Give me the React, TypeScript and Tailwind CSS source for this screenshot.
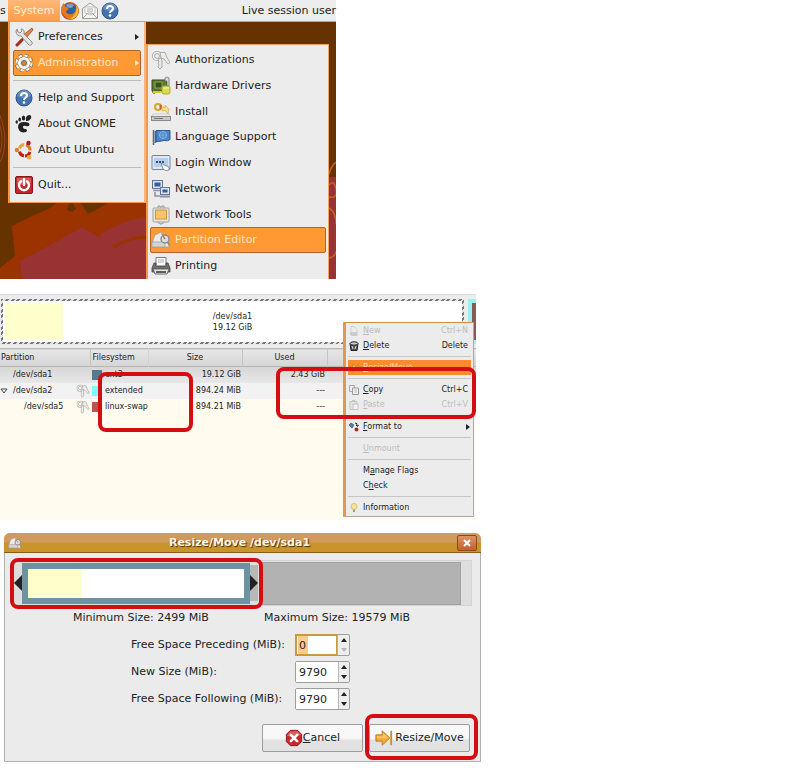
import type { ReactNode } from "react";
import clsx from "clsx";

function Icon({ box = 20, className = "size-5", children }: { box?: number; className?: string; children: ReactNode }) {
  return (
    <svg viewBox={`0 0 ${box} ${box}`} className={clsx("shrink-0", className)} fill="none" aria-hidden="true">
      {children}
    </svg>
  );
}

const HelpIcon = () => (
  <Icon>
    <circle cx="10" cy="10" r="8" fill="#4472ae" stroke="#2c5488" />
    <path d="M3 8a7 6 0 0 1 14 0q-7 4-14 0" fill="#7aa0d0" opacity=".6" />
    <path d="M7 8q0-3 3-3t3 2.6q0 1.6-1.800 2.400-1.200.7-1.200 2" stroke="#fff" strokeWidth="2" />
    <circle cx="10" cy="14.500" r="1.300" fill="#fff" />
  </Icon>
);

const FirefoxIcon = () => (
  <Icon>
    <circle cx="10" cy="10" r="9" fill="#c9591b" />
    <circle cx="10" cy="8.500" r="6.500" fill="#2f5f9e" />
    <path d="M6 4q4-3 8 0-1 3-4 3T6 4" fill="#6fa3d6" />
    <path d="M1 8Q2 3 4 2q0 3 3 4l2 2q-3 1-3 3 2 3 6 2 3-1 4-5 1 1 3 1-1 9-9 10Q2 19 1 8" fill="#e8781e" />
    <path d="M16 4q4 5 1 10-2 4-7 4 5-3 6-7 1-4 0-7" fill="#f6c02d" />
    <path d="M2 11q2 6 7 7-6 0-7-7" fill="#8a2f12" />
  </Icon>
);

const MailIcon = () => (
  <Icon>
    <path d="M2.500 7.500 10 2l7.500 5.500v10h-15z" fill="#f4f4f2" stroke="#9b9b98" />
    <path d="M5 6h10v6l-5 2-5-2z" fill="#fff" stroke="#c2c2bf" />
    <path d="M3 17l5-5h4l5 5M7 8h6M7 10h6" stroke="#aaaaa7" />
  </Icon>
);

const PreferencesIcon = () => (
  <Icon>
    <path d="M15 5L6 14" stroke="#777" strokeWidth="1.500" />
    <path d="M18 1l1 2-8 9-3-3z" fill="#e08650" stroke="#a2481a" strokeWidth=".8" />
    <path d="M3 2l1 3 2 1 2-2-1-2q4 0 3 5l8 8q1 2-1 3-2 1-3-1L7 9Q2 9 2 4z" fill="#e4e4e1" stroke="#777" strokeWidth=".8" />
    <path d="M8 13L3 18" stroke="#a22b1b" strokeWidth="3" strokeLinecap="round" />
  </Icon>
);

const GearIcon = () => (
  <Icon>
    <circle cx="10" cy="10" r="7.500" stroke="#6f6a62" strokeWidth="3.600" strokeDasharray="3.900 2" />
    <circle cx="10" cy="10" r="7.500" stroke="#f3f1ea" strokeWidth="2.200" strokeDasharray="3.400 2.500" />
    <circle cx="10" cy="10" r="5" fill="#e6e2d8" stroke="#fff" strokeWidth="2" />
    <circle cx="10" cy="10" r="2.500" fill="#c98b45" stroke="#6f6a62" />
  </Icon>
);

const GnomeIcon = () => (
  <Icon>
    <path d="M15 1q3 0 2 3.500-2 3-5 2.500-1-5 3-6" fill="#222" />
    <ellipse cx="9.500" cy="4" rx="1.700" ry="2.500" fill="#222" />
    <ellipse cx="5.700" cy="5.500" rx="1.300" ry="2.100" fill="#222" />
    <ellipse cx="2.700" cy="8" rx="1.200" ry="1.700" fill="#222" />
    <path d="M4 13q0-5 6-5 6 0 5.500 3-1 2-3.500 1-3-1-3 1t3 2q2 1.500 0 3-7 2-8-5" fill="#222" />
  </Icon>
);

const UbuntuIcon = () => (
  <Icon>
    <path d="M5.500 8.500A5.500 5.500 0 0 1 10 4.500" stroke="#e8a33a" strokeWidth="3" />
    <path d="M12 5a5.500 5.500 0 0 1 4 5.500" stroke="#e07822" strokeWidth="3" />
    <path d="M16 12a5.500 5.500 0 0 1-5 4" stroke="#c02016" strokeWidth="3" />
    <path d="M10 16a5.500 5.500 0 0 1-4.500-4.500" stroke="#c02016" strokeWidth="3" />
    <circle cx="14.500" cy="3" r="2.200" fill="#a5191b" />
    <circle cx="2.800" cy="10" r="2.200" fill="#e0802a" />
    <circle cx="15" cy="17.300" r="2.200" fill="#e9a93c" />
  </Icon>
);

const QuitIcon = () => (
  <Icon>
    <rect x="1.500" y="1.500" width="17" height="17" rx="1.500" fill="#c4272b" stroke="#8a1518" />
    <path d="M3 3h14v5q-7 3-14 1z" fill="#d9565a" />
    <path d="M7 6.200a5 5 0 1 0 6 0" stroke="#fff" strokeWidth="2.400" strokeLinecap="round" />
    <path d="M10 4v6" stroke="#fff" strokeWidth="2.400" strokeLinecap="round" />
  </Icon>
);

const KeysIcon = ({ className }: { className?: string }) => (
  <Icon className={className}>
    <circle cx="6" cy="6" r="3.500" stroke="#a3a3a0" strokeWidth="3" />
    <circle cx="6" cy="6" r="3.500" stroke="#efefed" strokeWidth="1.600" />
    <path d="M9 2.500h5l2 5 3 5-2 1.500-4-5-3-1z" fill="#ededeb" stroke="#9a9a97" strokeWidth=".8" />
    <path d="M7 9l3-1 1 2v7l-2 2-2-2 1-2-1-2 1-1z" fill="#e9e9e6" stroke="#9a9a97" strokeWidth=".8" />
  </Icon>
);

const DriversIcon = () => (
  <Icon>
    <path d="M1 4h15v11H4v2H2v-2H1z" fill="#5c7a2c" stroke="#33481a" />
    <path d="M4 6h7v6H4z" fill="#39501f" stroke="#8ba85a" />
    <path d="M2 16h8" stroke="#d8c838" strokeWidth="2" />
    <path d="M14 2q4-2 4 1v7h-2V5h-2z" fill="#ddd" stroke="#6c6c6c" strokeWidth=".8" />
    <rect x="11" y="10" width="8" height="8" rx="2" fill="#d9dc4a" stroke="#a9aa38" />
    <path d="M12 12h6" stroke="#f6f7a8" />
  </Icon>
);

const InstallIcon = () => (
  <Icon>
    <circle cx="7" cy="5" r="3" stroke="#dba32f" strokeWidth="2" />
    <path d="M9 3a3 3 0 0 1 0 4" stroke="#d06030" strokeWidth="2" />
    <path d="M11 5h4l-1-2 4 4-1 5-2-3q-2-1-4 0z" fill="#f3dc8d" stroke="#d8b450" strokeWidth=".8" />
    <path d="M2 12h16l1.500 3h-19z" fill="#eee" stroke="#bbb" strokeWidth=".6" />
    <rect x=".5" y="14.500" width="19" height="4" fill="#c9c9c7" stroke="#777" strokeWidth=".8" />
    <path d="M3 16.500h9" stroke="#777" />
  </Icon>
);

const LanguageIcon = () => (
  <Icon>
    <path d="M2.500 3v15M4.500 4v12" stroke="#566579" strokeWidth="1.500" />
    <path d="M5 3.500h14v9q-2 2-6 1-4 1-8 1z" fill="#4a86c8" stroke="#2d5c92" />
    <circle cx="12" cy="8" r="3.500" stroke="#8cb7e4" />
    <path d="M8 8h8M12 4v8" stroke="#8cb7e4" strokeWidth=".7" />
  </Icon>
);

const LoginIcon = () => (
  <Icon>
    <rect x="1" y="2.500" width="18" height="14" rx="1" fill="#dfe9f5" stroke="#6788ad" />
    <rect x="3" y="5" width="14" height="9" fill="#b5cfeb" />
    <path d="M5 9h2m1 0h2m1 0h2" stroke="#2e4f7a" strokeWidth="2" />
    <path d="M10 10l2 6q3 3 6 1v-3l-5-2z" fill="#fff" stroke="#777" strokeWidth=".8" />
  </Icon>
);

const NetworkIcon = () => (
  <Icon>
    <rect x="1.500" y="1.500" width="10" height="8" fill="#dde3ea" stroke="#64748a" />
    <rect x="3.500" y="3.500" width="6" height="4" fill="#2f5f9e" />
    <path d="M2 11.500h10M4 13v4h5" stroke="#8a929d" strokeWidth="1.500" />
    <rect x="9.500" y="8.500" width="9" height="7" fill="#dde3ea" stroke="#64748a" />
    <rect x="11.500" y="10.500" width="5" height="3" fill="#2f5f9e" />
    <path d="M9 17.500h10" stroke="#8a929d" strokeWidth="2" />
  </Icon>
);

const ToolsIcon = () => (
  <Icon>
    <path d="M7 3V1h2v1h2V1h2v2M7 16v2h2v1h2v-1h2v-2" stroke="#999" />
    <rect x="2" y="3" width="16" height="14" rx="1" fill="#e6e4de" stroke="#a3a29d" />
    <rect x="4.500" y="5" width="11" height="9" fill="#f9c468" stroke="#d6943a" />
  </Icon>
);

const PartitionIcon = ({ className }: { className?: string }) => (
  <Icon className={className}>
    <path d="M2 10l2-5 6-3 1 3 5 3 2 9H2z" fill="#ecebe9" stroke="#a19e9b" strokeWidth=".8" />
    <path d="M1 12h13v5H1z" fill="#d6d4d1" stroke="#a19e9b" strokeWidth=".8" />
    <circle cx="14" cy="9" r="4" fill="#e0dedb" stroke="#8d8986" strokeWidth="1.400" />
    <path d="M14 9l-2-3M16 12l3 3" stroke="#8d8986" strokeWidth="1.400" />
  </Icon>
);

const PrinterIcon = () => (
  <Icon>
    <path d="M5 9V1.500h10V9" fill="#fff" stroke="#777" />
    <path d="M7 4h6M7 6h6" stroke="#aaa" />
    <path d="M3 7h2v3h10V7h2l2 5v4H1v-4z" fill="#6e6e6e" stroke="#444" strokeWidth=".8" />
    <path d="M2 13h16l-2 5H4z" fill="#e2e2e0" stroke="#555" strokeWidth=".8" />
    <path d="M5 16h10" stroke="#333" strokeWidth="1.500" />
  </Icon>
);

const TrashIcon = () => (
  <Icon box={10} className="size-2.5">
    <path d="M1 2.500h8L8 9.500H2z" fill="#555" stroke="#222" />
    <ellipse cx="5" cy="2.500" rx="4" ry="1.700" fill="#ccc" stroke="#222" />
    <path d="M3 5l1 3M7 5L6 8" stroke="#ddd" />
  </Icon>
);

const CopyIcon = () => (
  <Icon box={10} className="size-2.5">
    <path d="M.5.500h5v6h-5z" fill="#eee" stroke="#aaa" />
    <path d="M3.500 3h6v6.500h-6z" fill="#f6f6f6" stroke="#999" />
    <path d="M5 5h3M5 7h3" stroke="#bbb" />
  </Icon>
);

const PasteIcon = () => (
  <Icon box={10} className="size-2.5">
    <path d="M1 1.500h7v8H1zM3 .5h3" fill="#e4e4e2" stroke="#c4c4c1" />
    <path d="M4 4h5v5.500H4z" fill="#f3f3f3" stroke="#c4c4c1" />
  </Icon>
);

const NewIcon = () => (
  <Icon box={10} className="size-2.5">
    <path d="M2 .5h3l3 3v6H2z" fill="#eee" stroke="#ccc" />
    <path d="M1 6h7v3H1z" fill="#ccc" />
  </Icon>
);

const FormatIcon = () => (
  <Icon box={10} className="size-2.5">
    <path d="M0 3l2-2 3 2-2 3z" fill="#5580ab" stroke="#33465c" strokeWidth=".6" />
    <path d="M6 1q3 0 2 3M7 3l1.500 1.500L9.500 3" stroke="#222" />
    <circle cx="7.500" cy="7.500" r="2" fill="#b3262a" />
  </Icon>
);

const BulbIcon = () => (
  <Icon box={10} className="size-2.5">
    <circle cx="5" cy="3.500" r="3" fill="#f9e59a" stroke="#d2b25c" strokeWidth=".8" />
    <path d="M4 6.500h2V9H4z" fill="#999" />
  </Icon>
);

const MoveIcon = ({ className }: { className: string }) => (
  <Icon className={className}>
    <path d="M1 6.500h7V2l8.500 8L8 18v-4.500H1z" fill="#f5a93a" stroke="#b8731a" />
    <path d="M2 8h7V4.500l5.500 5.500H2z" fill="#fbc56c" />
    <path d="M18 2v16" stroke="#c98a2a" strokeWidth="2" />
  </Icon>
);

const CancelIcon = () => (
  <Icon className="size-[18px]">
    <path d="M6 1.500h8L18.500 6v8L14 18.500H6L1.500 14V6z" fill="#c8262b" stroke="#8d1518" />
    <path d="M6 2.500h8l4 4q-8 4-16 1z" fill="#dc5b5e" />
    <path d="M6.500 6.500l7 7m0-7l-7 7" stroke="#fff" strokeWidth="3" strokeLinecap="round" />
  </Icon>
);

const Arrow = ({ className = "h-1.5 w-1" }: { className?: string }) => (
  <svg viewBox="0 0 4 6" preserveAspectRatio="none" className={clsx("shrink-0", className)} aria-hidden="true">
    <path d="M0 0l4 3-4 3z" fill="currentColor" />
  </svg>
);

// red marker drawn round the part of the window to look at
const Marker = ({ className }: { className: string }) => (
  <div className={clsx("pointer-events-none absolute rounded-lg border-4 border-[#d40d12]", className)} />
);

function Wallpaper() {
  return (
    <svg viewBox="0 0 336 257" preserveAspectRatio="none" className="absolute inset-0 size-full" aria-hidden="true">
      <path d="M0 0h336v257H0z" fill="#663300" />
      <path d="M0 257V246l15-12-3-30 16-8 22-10 8-6q14-8 22 0l8 12 22-12 36-16 150-48v141z" fill="#9a3300" />
      <path d="M22 257l-2-18 38-20 24-14 16 10q20-16 49-20l155-40h34v102z" fill="#993333" />
      <path d="M67 188q1-7 5-8l4 7-4 3z" fill="#663300" />
      <path d="M113 226q15-11 34-11" stroke="#9a3300" strokeWidth="3" fill="none" />
      <path d="M0 93q7 20 4 35-1 8-4 12M0 103q4 15 0 28" stroke="#a23a30" fill="none" />
      <path d="M329 152q2-8 7-12M329 163q5-6 7 4t-7 8M329 186q7 4 7 16M329 236q7-2 7-7" stroke="#c8601e" strokeWidth="1.500" fill="none" />
    </svg>
  );
}

const submenu = [
  { label: "Authorizations", icon: <KeysIcon className="size-5" /> },
  { label: "Hardware Drivers", icon: <DriversIcon /> },
  { label: "Install", icon: <InstallIcon /> },
  { label: "Language Support", icon: <LanguageIcon /> },
  { label: "Login Window", icon: <LoginIcon /> },
  { label: "Network", icon: <NetworkIcon /> },
  { label: "Network Tools", icon: <ToolsIcon /> },
  { label: "Partition Editor", icon: <PartitionIcon className="size-5" />, active: true },
  { label: "Printing", icon: <PrinterIcon /> },
];

function MenuRow({ icon, label, active, arrow }: { icon: ReactNode; label: string; active?: boolean; arrow?: boolean }) {
  return (
    <button
      className={clsx(
        "flex h-[26px] w-full items-center gap-1 rounded-xs border text-left",
        active ? "border-[#b0642a] bg-[#ff9933] text-[#fbe8c8]" : "border-transparent"
      )}
    >
      {icon}
      <span className="flex-1 whitespace-nowrap">{label}</span>
      {arrow && <Arrow className="mr-px h-1.5 w-1" />}
    </button>
  );
}

const Rule = () => <div className="my-1 h-px bg-[#bdbdbb]" />;

function Desktop() {
  return (
    <section className="w-full max-w-[336px] text-[11px] text-[#222]">
      <header className="flex h-[22px] items-center border-b border-[#a9a9a7] bg-[#ededed]">
        <span className="w-2">s</span>
        <button className="h-[21px] w-13 bg-linear-to-b from-[#ffb877] to-[#ff9c47] text-[#fdf0d0]">System</button>
        <div className="flex">
          <FirefoxIcon />
          <MailIcon />
          <HelpIcon />
        </div>
        <span className="ml-auto whitespace-nowrap">Live session user</span>
      </header>
      <div className="relative">
        <Wallpaper />
        <div className="relative flex items-start pl-2">
          <nav className="w-[138px] border-x-2 border-b border-[#f79646] border-r-[#f7b47c] bg-[#ececec] px-[3px] pt-0.5 pb-1">
            <MenuRow icon={<PreferencesIcon />} label="Preferences" arrow />
            <MenuRow icon={<GearIcon />} label="Administration" active arrow />
            <Rule />
            <MenuRow icon={<HelpIcon />} label="Help and Support" />
            <MenuRow icon={<GnomeIcon />} label="About GNOME" />
            <MenuRow icon={<UbuntuIcon />} label="About Ubuntu" />
            <Rule />
            <MenuRow icon={<QuitIcon />} label="Quit..." />
          </nav>
          <nav className="mt-[22px] w-[183px] border border-b-0 border-l-2 border-[#f0a468] border-l-[#f79646] bg-[#ececec] px-0.5 pt-0.5">
            <ul className="grid h-[232px] auto-rows-fr">
              {submenu.map((item) => (
                <li key={item.label}>
                  <MenuRow {...item} />
                </li>
              ))}
            </ul>
          </nav>
        </div>
      </div>
    </section>
  );
}

const partitions = [
  { name: "/dev/sda1", fs: "ext3", size: "19.12 GiB", used: "2.43 GiB", color: "bg-[#557a90]", row: "bg-linear-to-b from-[#d6d6d6] to-[#e9e9e9]" },
  { name: "/dev/sda2", fs: "extended", size: "894.24 MiB", used: "---", color: "bg-[#7dfcfe]", row: "bg-[#f2f2f2]", locked: true, open: true },
  { name: "/dev/sda5", fs: "linux-swap", size: "894.21 MiB", used: "---", color: "bg-[#c1534f]", row: "bg-[#fffbee]", locked: true, nested: true },
];

type Entry = { label: string; mnemonic?: number; keys?: string; icon?: ReactNode; state?: "off" | "active"; arrow?: boolean };

const contextMenu: (Entry | null)[] = [
  { label: "New", mnemonic: 0, keys: "Ctrl+N", icon: <NewIcon />, state: "off" },
  { label: "Delete", mnemonic: 0, keys: "Delete", icon: <TrashIcon /> },
  null,
  { label: "Resize/Move", mnemonic: 0, icon: <MoveIcon className="size-2.5" />, state: "active" },
  null,
  { label: "Copy", mnemonic: 0, keys: "Ctrl+C", icon: <CopyIcon /> },
  { label: "Paste", mnemonic: 0, keys: "Ctrl+V", icon: <PasteIcon />, state: "off" },
  null,
  { label: "Format to", mnemonic: 0, icon: <FormatIcon />, arrow: true },
  null,
  { label: "Unmount", mnemonic: 0, state: "off" },
  null,
  { label: "Manage Flags", mnemonic: 1 },
  { label: "Check", mnemonic: 1 },
  null,
  { label: "Information", icon: <BulbIcon /> },
];

function Mnemonic({ text, at }: { text: string; at?: number }) {
  if (at === undefined) return <>{text}</>;
  return (
    <>
      {text.slice(0, at)}
      <u>{text[at]}</u>
      {text.slice(at + 1)}
    </>
  );
}

function ContextMenu() {
  return (
    <div className="absolute top-7 right-0.5 w-[131px] border border-l-3 border-[#a9a9a7] border-t-[#d58a4a] border-l-[#e5964f] bg-[#ececec] px-0.5 pb-px">
      {contextMenu.map((entry, i) =>
        entry ? (
          <button
            key={entry.label}
            disabled={entry.state === "off"}
            className={clsx(
              "flex h-[15px] w-full items-center px-px text-left",
              entry.state === "off" && "text-[#bcbcba]",
              entry.state === "active" && "bg-[#fb8c2e] text-[#fbd9b0]"
            )}
          >
            <span className="flex w-3.5 shrink-0">{entry.icon}</span>
            <span className="flex-1 whitespace-nowrap">
              <Mnemonic text={entry.label} at={entry.mnemonic} />
            </span>
            <span className="mr-0.5">{entry.keys}</span>
            {entry.arrow && <Arrow />}
          </button>
        ) : (
          <div key={i} className="my-[3px] h-px bg-[#c6c6c4]" />
        )
      )}
    </div>
  );
}

function PartitionWindow() {
  return (
    <section className="relative mt-[15px] w-full max-w-[476px] bg-[#fffbee] text-[8px] text-[#222]">
      <div className="flex h-[54px] gap-1 border-t border-[#dcdcda] bg-[#ececec] pt-1 pb-1 pl-px">
        <div className="flex flex-1 bg-[repeating-linear-gradient(135deg,#777_0_2px,#e4e4e0_2px_4px)] p-0.5">
          <div className="relative flex flex-1 items-center justify-center bg-white text-center leading-[11px]">
            <div className="absolute inset-y-0.5 left-0.5 w-[58px] bg-[#ffffcc]" />
            <p className="relative">
              /dev/sda1
              <br />
              19.12 GiB
            </p>
          </div>
        </div>
        <div className="w-2 border-4 border-r-0 border-[#9af0f2] bg-[#8b5a55]" />
      </div>
      <table className="w-full table-fixed border-collapse">
        <colgroup>
          <col className="w-[90px]" />
          <col className="w-[58px]" />
          <col className="w-[94px]" />
          <col className="w-[85px]" />
          <col />
        </colgroup>
        <thead>
          <tr className="h-[18px] border-y border-[#b9b9b7] bg-linear-to-b from-[#e6e6e6] to-[#d6d6d6]">
            <th className="border-r border-[#c4c4c2] pl-px text-left font-normal">Partition</th>
            <th className="border-r border-[#d2d2d0] pl-0.5 text-left font-normal">Filesystem</th>
            <th className="border-r border-[#c4c4c2] font-normal">Size</th>
            <th className="border-r border-[#c4c4c2] font-normal">Used</th>
            <th />
          </tr>
        </thead>
        <tbody>
          {partitions.map((p) => (
            <tr key={p.name} className={clsx("h-4", p.row)}>
              <td>
                <div className="flex items-center">
                  <span className={clsx("shrink-0", p.nested ? "w-6" : "w-[13px]")}>
                    {p.open && (
                      <svg viewBox="0 0 8 6" className="h-1.5 w-2" fill="#fff" stroke="#444" aria-hidden="true">
                        <path d="M1 1h6L4 5z" />
                      </svg>
                    )}
                  </span>
                  <span className="flex-1">{p.name}</span>
                  {p.locked && <KeysIcon className="size-3.5" />}
                </div>
              </td>
              <td>
                <div className="flex items-center gap-[3px] pl-0.5 whitespace-nowrap">
                  <i className={clsx("size-2.5 shrink-0", p.color)} />
                  {p.fs}
                </div>
              </td>
              <td className="pr-px text-right">{p.size}</td>
              <td className="pr-0.5 text-right">{p.used}</td>
              <td />
            </tr>
          ))}
        </tbody>
      </table>
      <div className="h-[105px]" />
      <ContextMenu />
      <Marker className="top-[78px] left-[98px] h-[60px] w-[95px]" />
      <Marker className="top-[73px] right-0 h-[52px] w-[200px]" />
    </section>
  );
}

const fields = [
  { id: "preceding", label: "Free Space Preceding (MiB):", value: "0", focused: true },
  { id: "size", label: "New Size (MiB):", value: "9790" },
  { id: "following", label: "Free Space Following (MiB):", value: "9790" },
];

function SpinBox({ id, value, focused }: { id: string; value: string; focused?: boolean }) {
  return (
    <div className="flex h-[22px] w-[55px] rounded-xs border border-[#9d9d9b] bg-[#eee]">
      <div className={clsx("w-[42px] bg-white px-0.5", focused && "-m-px w-[43px] border-2 border-[#c99a3c] px-px")}>
        <input
          id={id}
          defaultValue={value}
          className={clsx("h-full px-px outline-none", focused ? "w-2.5 bg-[#fccb8c]" : "w-full")}
        />
      </div>
      <div className="flex flex-1 flex-col border-l border-[#b5b5b3]">
        <button aria-label="Increase" className="flex flex-1 items-center justify-center">
          <Arrow className="h-1.5 w-1 -rotate-90" />
        </button>
        <button aria-label="Decrease" className={clsx("flex flex-1 items-center justify-center", focused && "text-[#b5b5b3]")}>
          <Arrow className="h-1.5 w-1 rotate-90" />
        </button>
      </div>
    </div>
  );
}

function ResizeDialog() {
  return (
    <section className="relative mt-[13px] ml-1 w-full max-w-[477px] rounded-t-md border border-[#b0b0ae] bg-[#ebebeb] text-[11px] text-[#222]">
      <header className="-mx-px -mt-px flex h-5 items-center rounded-t-md border-b border-[#8a5c1c] bg-linear-to-b from-[#d09a5c] from-45% to-[#c9942c] to-55% px-1">
        <PartitionIcon className="size-3.5" />
        <h2 className="flex-1 text-center font-bold text-[#fdf6e6] [text-shadow:1px_1px_1px_#4a2c08]">Resize/Move /dev/sda1</h2>
        <button aria-label="Close" className="flex h-4 w-5 items-center justify-center rounded-xs border border-[#8c4a1c] bg-linear-to-b from-[#dc9462] to-[#c4602c]">
          <svg viewBox="0 0 8 8" className="size-2" stroke="#fff" strokeWidth="2" aria-hidden="true">
            <path d="M1 1l6 6M7 1L1 7" />
          </svg>
        </button>
      </header>
      <div className="mx-2 mt-[7px] flex h-[46px] items-center border border-[#d4d4d2] bg-[#dedede]">
        <Arrow className="h-4 w-2 rotate-180" />
        <div className="h-[41px] w-[228px] border-[6px] border-[#6d93a2] bg-white">
          <div className="h-full w-[54px] bg-[#ffffcc]" />
        </div>
        <div className="flex h-9 items-center bg-[#b8b8b6]">
          <Arrow className="h-4 w-2" />
        </div>
        <div className="ml-0.5 h-[43px] flex-1 border border-[#a2a2a0] bg-[#b2b2b2]" />
        <div className="w-2.5" />
      </div>
      <div className="flex pt-1 pl-17">
        <span className="w-[191px]">Minimum Size: 2499 MiB</span>
        <span>Maximum Size: 19579 MiB</span>
      </div>
      <div className="mt-2 flex flex-col gap-[5px] pl-[126px]">
        {fields.map((f) => (
          <div key={f.id} className="flex items-center">
            <label htmlFor={f.id} className="w-[164px]">
              {f.label}
            </label>
            <SpinBox id={f.id} value={f.value} focused={f.focused} />
          </div>
        ))}
      </div>
      <div className="mt-3.5 mb-[9px] flex justify-end gap-1.5 pr-2.5">
        <button className="flex h-7 w-[101px] items-center justify-center rounded-xs border border-[#9d9d9b] bg-linear-to-b from-[#f8f8f8] from-50% to-[#e2e2e2] to-60%">
          <CancelIcon />
          <span>
            <Mnemonic text="Cancel" at={0} />
          </span>
        </button>
        <button className="flex h-7 w-[101px] items-center justify-center gap-0.5 rounded-xs border border-[#9d9d9b] bg-linear-to-b from-[#f8f8f8] from-50% to-[#e2e2e2] to-60%">
          <MoveIcon className="size-[18px]" />
          Resize/Move
        </button>
      </div>
      <Marker className="top-6 left-[5px] h-[51px] w-[253px]" />
      <Marker className="right-0.5 bottom-px h-[46px] w-[113px]" />
    </section>
  );
}

export default function App() {
  return (
    <main className="min-h-screen bg-white font-['DejaVu_Sans',sans-serif] leading-4">
      <Desktop />
      <PartitionWindow />
      <ResizeDialog />
    </main>
  );
}
